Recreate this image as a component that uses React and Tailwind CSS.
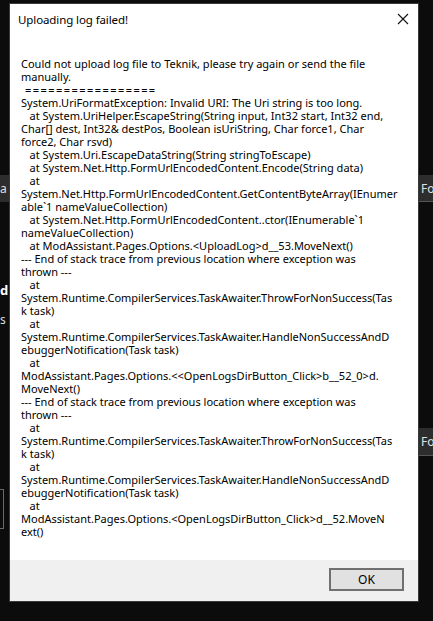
import React from "react";

const lines = [
  "Could not upload log file to Teknik, please try again or send the file",
  "manually.",
  null,
  "System.UriFormatException: Invalid URI: The Uri string is too long.",
  "   at System.UriHelper.EscapeString(String input, Int32 start, Int32 end,",
  "Char[] dest, Int32& destPos, Boolean isUriString, Char force1, Char",
  "force2, Char rsvd)",
  "   at System.Uri.EscapeDataString(String stringToEscape)",
  "   at System.Net.Http.FormUrlEncodedContent.Encode(String data)",
  "   at",
  "System.Net.Http.FormUrlEncodedContent.GetContentByteArray(IEnumer",
  "able`1 nameValueCollection)",
  "   at System.Net.Http.FormUrlEncodedContent..ctor(IEnumerable`1",
  "nameValueCollection)",
  "   at ModAssistant.Pages.Options.<UploadLog>d__53.MoveNext()",
  "--- End of stack trace from previous location where exception was",
  "thrown ---",
  "   at",
  "System.Runtime.CompilerServices.TaskAwaiter.ThrowForNonSuccess(Tas",
  "k task)",
  "   at",
  "System.Runtime.CompilerServices.TaskAwaiter.HandleNonSuccessAndD",
  "ebuggerNotification(Task task)",
  "   at",
  "ModAssistant.Pages.Options.<<OpenLogsDirButton_Click>b__52_0>d.",
  "MoveNext()",
  "--- End of stack trace from previous location where exception was",
  "thrown ---",
  "   at",
  "System.Runtime.CompilerServices.TaskAwaiter.ThrowForNonSuccess(Tas",
  "k task)",
  "   at",
  "System.Runtime.CompilerServices.TaskAwaiter.HandleNonSuccessAndD",
  "ebuggerNotification(Task task)",
  "   at",
  "ModAssistant.Pages.Options.<OpenLogsDirButton_Click>d__52.MoveN",
  "ext()",
];

export default function App() {
  return (
    <div
      className="relative w-[433px] h-[621px] overflow-hidden bg-[#0c0c0c]"
      style={{ fontFamily: '"Noto Sans", "Open Sans", sans-serif' }}
    >
      {/* background window fragments */}
      <div className="flex flex-col pt-[175px]">
        <div className="flex justify-between h-[27px]">
          <div className="w-[9px] bg-[#2d2d2d] text-[#e0e0e0] text-[12px] leading-[27px] overflow-hidden">
            a
          </div>
          <div className="w-[14px] bg-[#2d2d2d] border-b border-[#555] text-[#e0e0e0] text-[12px] leading-[27px] pl-[2px] overflow-hidden whitespace-nowrap">
            Fol
          </div>
        </div>
        <div className="h-[80px]" />
        <div className="w-[9px] overflow-hidden text-white font-bold text-[13px] leading-[16px]">d</div>
        <div className="h-[14px]" />
        <div className="w-[9px] overflow-hidden whitespace-nowrap text-[#dcdcdc] text-[12px] leading-[16px]">s :</div>
        <div className="flex justify-end mt-[100px] h-[28px]">
          <div className="w-[14px] bg-[#2d2d2d] border-b border-[#555] text-[#e0e0e0] text-[12px] leading-[28px] pl-[2px] overflow-hidden whitespace-nowrap">
            Fol
          </div>
        </div>
        <div className="mt-[33px] w-[4px] h-[40px] border border-l-0 border-[#6a6a6a]" />
      </div>

      {/* dialog */}
      <div className="absolute left-[9px] top-[3px] w-[410px] h-[599px] flex flex-col bg-white border border-[#3a3a3a]">
        <div className="h-[30px] flex items-center justify-between pl-[8px] pr-[9px] shrink-0">
          <span className="text-[11.5px] text-black leading-[16px] pt-[1px] tracking-[-0.1px]">Uploading log failed!</span>
          <svg width="12" height="12" viewBox="0 0 12 12">
            <path d="M1 1 L11 11 M11 1 L1 11" stroke="#111" strokeWidth="1.1" fill="none" />
          </svg>
        </div>
        <div className="flex-1 pl-[11px] pt-[23px]">
          {lines.map((l, i) =>
            l === null ? (
              <div
                key={i}
                className="whitespace-pre text-[11px] leading-[13px] text-black tracking-[1.45px] pl-[4px]"
              >
                =================
              </div>
            ) : (
              <div
                key={i}
                className="whitespace-pre text-[11px] leading-[13px] text-black"
              >
                {l}
              </div>
            )
          )}
        </div>
        <div className="h-[41px] shrink-0 bg-[#f0f0f0] flex justify-end items-start pt-[8px] pr-[14px]">
          <div className="w-[75px] h-[23px] border-2 border-[#707070] bg-[#e1e1e1] flex items-center justify-center text-[12px] text-black">
            OK
          </div>
        </div>
      </div>
    </div>
  );
}
